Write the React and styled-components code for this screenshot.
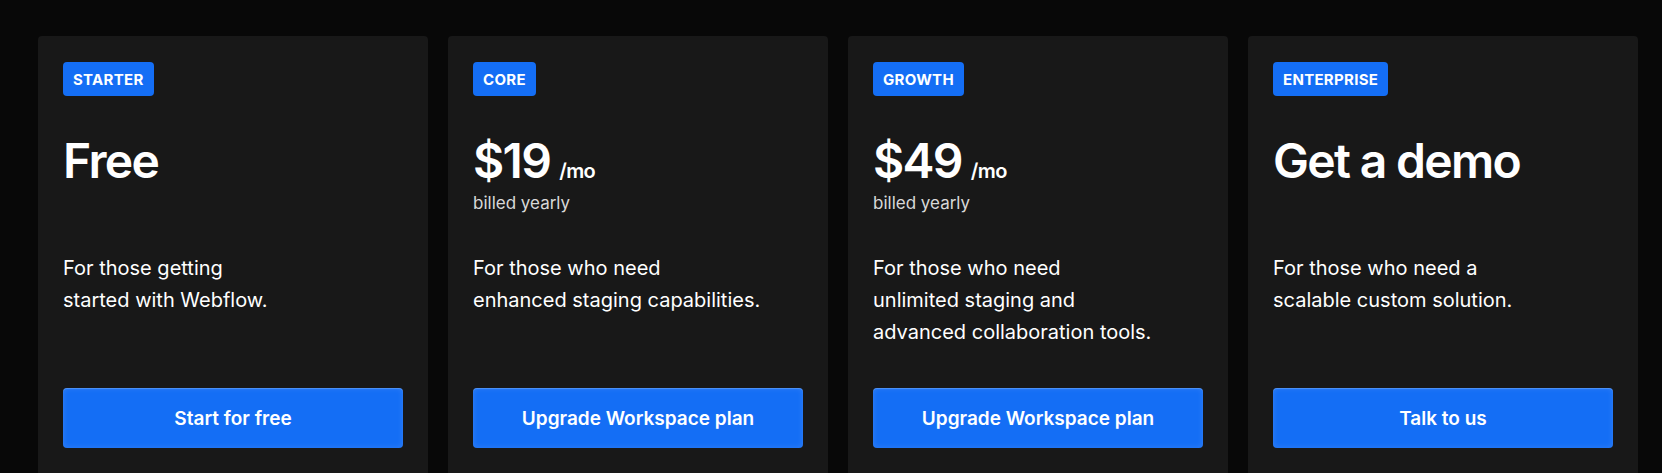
import React from "react";
import styled, { createGlobalStyle } from "styled-components";

const Global = createGlobalStyle`
  html, body { margin: 0; padding: 0; background: #080808; }
  body { font-family: Inter, "Noto Sans", sans-serif; color: #fff; -webkit-font-smoothing: antialiased; }
`;

const Page = styled.div`
  height: 473px;
  overflow: hidden;
  background: #080808;
  padding: 36px 0 0 38px;
  box-sizing: border-box;
`;

const Grid = styled.div`
  display: grid;
  grid-template-columns: 390px 380px 380px 390px;
  column-gap: 20px;
  align-items: start;
`;

const Card = styled.div`
  background: #181818;
  border-radius: 4px;
  padding: 26px 25px 40px;
  display: flex;
  flex-direction: column;
  align-items: flex-start;
  min-height: 460px;
  box-sizing: border-box;
`;

const Badge = styled.span`
  display: inline-flex;
  align-items: center;
  height: 34px;
  padding: 0 10px;
  box-sizing: border-box;
  background: #146ef5;
  border-radius: 4px;
  font-size: 15px;
  font-weight: 700;
  letter-spacing: 0.02em;
  text-transform: uppercase;
  color: #fff;
`;

const PriceArea = styled.div`
  margin-top: 40px;
  height: 116px;
`;

const Heading = styled.div`
  display: flex;
  align-items: baseline;
  gap: 9px;
  font-size: 48px;
  line-height: 50px;
  font-weight: 600;
  letter-spacing: -0.035em;
  color: #fff;
`;

const Per = styled.span`
  font-size: 20px;
  font-weight: 600;
  letter-spacing: -0.03em;
`;

const Sub = styled.div`
  font-size: 17px;
  line-height: 22px;
  color: #d8d8d8;
  margin-top: -4px;
`;

const Desc = styled.p`
  margin: 0;
  font-size: 20px;
  line-height: 32px;
  color: #fff;
  height: 96px;
  white-space: pre-line;
`;

const Button = styled.button`
  margin-top: 40px;
  width: 100%;
  height: 60px;
  border: none;
  border-radius: 4px;
  background: #146ef5;
  box-shadow: inset 0 1px 1px rgba(255, 255, 255, 0.22), inset 0 0 6px rgba(255, 255, 255, 0.12);
  color: #fff;
  font-family: Inter, "Noto Sans", sans-serif;
  font-size: 19px;
  font-weight: 600;
  cursor: pointer;
`;

const plans = [
  { tag: "Starter", title: "Free", desc: "For those getting\nstarted with Webflow.", cta: "Start for free" },
  { tag: "Core", price: "$19", desc: "For those who need\nenhanced staging capabilities.", cta: "Upgrade Workspace plan" },
  { tag: "Growth", price: "$49", desc: "For those who need\nunlimited staging and\nadvanced collaboration tools.", cta: "Upgrade Workspace plan" },
  { tag: "Enterprise", title: "Get a demo", desc: "For those who need a\nscalable custom solution.", cta: "Talk to us" },
];

export default function App() {
  return (
    <Page>
      <Global />
      <Grid>
        {plans.map((p) => (
          <Card key={p.tag}>
            <Badge>{p.tag}</Badge>
            <PriceArea>
              {p.price ? (
                <>
                  <Heading>
                    {p.price}
                    <Per>/mo</Per>
                  </Heading>
                  <Sub>billed yearly</Sub>
                </>
              ) : (
                <Heading>{p.title}</Heading>
              )}
            </PriceArea>
            <Desc>{p.desc}</Desc>
            <Button>{p.cta}</Button>
          </Card>
        ))}
      </Grid>
    </Page>
  );
}
